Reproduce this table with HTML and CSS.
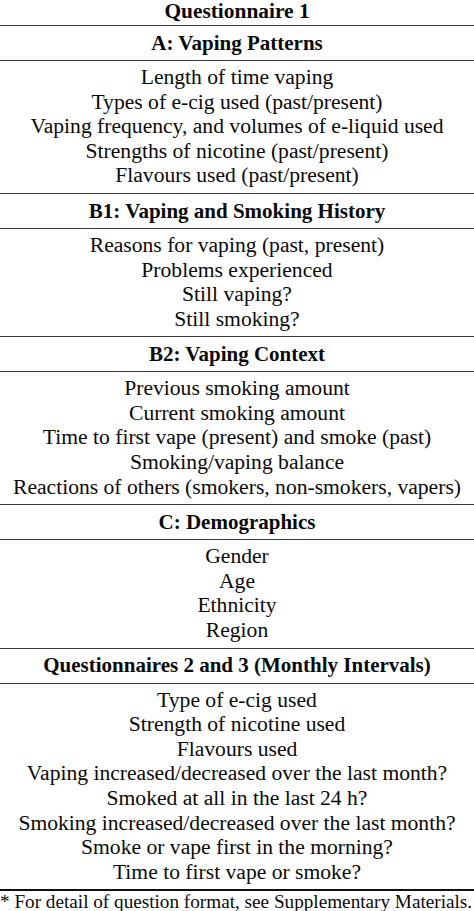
FILE: index.html
```html
<!DOCTYPE html>
<html>
<head>
<meta charset="utf-8">
<link rel="stylesheet" href="styles.css">
</head>
<body>
<div class="table">
  <div class="title">Questionnaire 1</div>
  <div class="head">A: Vaping Patterns</div>
  <div class="rows">
    <div>Length of time vaping</div>
    <div>Types of e-cig used (past/present)</div>
    <div>Vaping frequency, and volumes of e-liquid used</div>
    <div>Strengths of nicotine (past/present)</div>
    <div>Flavours used (past/present)</div>
  </div>
  <div class="head">B1: Vaping and Smoking History</div>
  <div class="rows">
    <div>Reasons for vaping (past, present)</div>
    <div>Problems experienced</div>
    <div>Still vaping?</div>
    <div>Still smoking?</div>
  </div>
  <div class="head">B2: Vaping Context</div>
  <div class="rows">
    <div>Previous smoking amount</div>
    <div>Current smoking amount</div>
    <div>Time to first vape (present) and smoke (past)</div>
    <div>Smoking/vaping balance</div>
    <div>Reactions of others (smokers, non-smokers, vapers)</div>
  </div>
  <div class="head">C: Demographics</div>
  <div class="rows">
    <div>Gender</div>
    <div>Age</div>
    <div>Ethnicity</div>
    <div>Region</div>
  </div>
  <div class="head">Questionnaires 2 and 3 (Monthly Intervals)</div>
  <div class="rows last">
    <div>Type of e-cig used</div>
    <div>Strength of nicotine used</div>
    <div>Flavours used</div>
    <div>Vaping increased/decreased over the last month?</div>
    <div>Smoked at all in the last 24 h?</div>
    <div>Smoking increased/decreased over the last month?</div>
    <div>Smoke or vape first in the morning?</div>
    <div>Time to first vape or smoke?</div>
  </div>
  <div class="note">* For detail of question format, see Supplementary Materials.</div>
</div>
</body>
</html>
```

FILE: styles.css
```css
html, body {
  margin: 0;
  padding: 0;
  background: #fff;
}
body {
  font-family: "Liberation Serif", "Times New Roman", serif;
  color: #0a0a0a;
  width: 474px;
}
.table {
  display: flex;
  flex-direction: column;
  text-align: center;
}
.title {
  height: 25px;
  line-height: 22px;
  font-weight: bold;
  font-size: 21.4px;
}
.head {
  border-top: 1px solid #3c3c3c;
  font-weight: bold;
  font-size: 21px;
  line-height: 24.6px;
  padding: 4.7px 0;
}
.rows {
  border-top: 1px solid #3c3c3c;
  font-size: 21.6px;
  line-height: 24.6px;
  padding: 4px 0 5px;
}
.rows.last {
  border-bottom: 2px solid #111;
}
.note {
  text-align: left;
  font-size: 19.2px;
  line-height: 22px;
  white-space: nowrap;
}
```
